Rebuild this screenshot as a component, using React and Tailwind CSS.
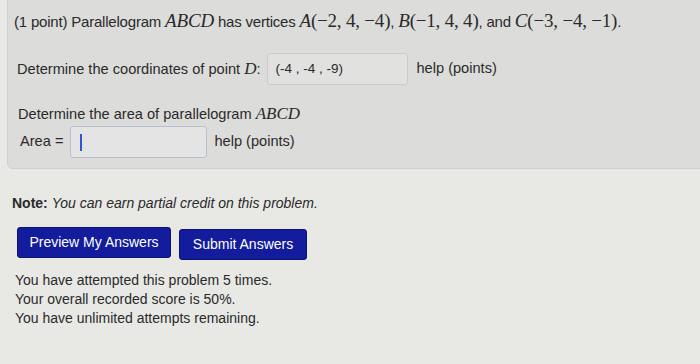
export default function App() {
  const serif = { fontFamily: '"Liberation Serif", "DejaVu Serif", serif' };
  const M = ({ children, size = "text-[19px]" }) => (
    <span className={"italic " + size} style={serif}>{children}</span>
  );
  const N = ({ children }) => (
    <span className="text-[19px]" style={serif}>{children}</span>
  );
  return (
    <div className="w-[700px] h-[364px] overflow-hidden bg-[#e8e8e5] text-[#2a2a2a] text-[14.6px] relative" style={{ fontFamily: '"Liberation Sans", Arial, sans-serif' }}>
      <div className="ml-[7px] mt-[-10px] w-[720px] h-[179px] bg-[#dcdcda] rounded-[6px] border border-[#d0d0ce] pl-[6px] pt-[20px]">
        <div className="text-[15px] leading-[20px] tracking-[-0.2px]">
          (1 point) Parallelogram <M>ABCD</M> has vertices <M>A</M><N>(−2, 4, −4)</N>, <M>B</M><N>(−1, 4, 4)</N>, and <M>C</M><N>(−3, −4, −1)</N>.
        </div>
        <div className="flex items-center mt-[21px] pl-[3px]">
          <span>Determine the coordinates of point <M size="text-[17px]">D</M>:</span>
          <div className="ml-[6px] w-[141px] h-[32px] bg-[#e1e1df] border border-[#cbcbc9] rounded-[3px] flex items-center px-[8px] text-[13.5px]">(-4 , -4 , -9)</div>
          <span className="ml-[9px]">help (points)</span>
        </div>
        <div className="mt-[19px] pl-[4px] leading-[20px]">
          Determine the area of parallelogram <M size="text-[17px]">ABCD</M>
        </div>
        <div className="flex items-center mt-[2px] pl-[6px]">
          <span>Area =</span>
          <div className="ml-[7px] w-[137px] h-[32px] bg-[#e3e4e3] border border-[#b5c1d1] rounded-[3px] flex items-center px-[9px]">
            <div className="w-[2px] h-[17px] bg-[#2f56d8]"></div>
          </div>
          <span className="ml-[7px]">help (points)</span>
        </div>
      </div>
      <div className="pl-[12px] mt-[24px] leading-[20px] text-[14px]">
        <span className="font-bold">Note:</span> <span className="italic">You can earn partial credit on this problem.</span>
      </div>
      <div className="flex items-start gap-[8px] pl-[17px] mt-[14px]">
        <button className="w-[154px] h-[31px] bg-[#121c9c] text-white rounded-[3px] text-[14px] border border-[#0c146f]">Preview My Answers</button>
        <button className="w-[128px] h-[31px] mt-[2px] bg-[#121c9c] text-white rounded-[3px] text-[14px] border border-[#0c146f]">Submit Answers</button>
      </div>
      <div className="pl-[15px] mt-[11px] leading-[19px] text-[14px]">
        <div>You have attempted this problem 5 times.</div>
        <div>Your overall recorded score is 50%.</div>
        <div>You have unlimited attempts remaining.</div>
      </div>
    </div>
  );
}
